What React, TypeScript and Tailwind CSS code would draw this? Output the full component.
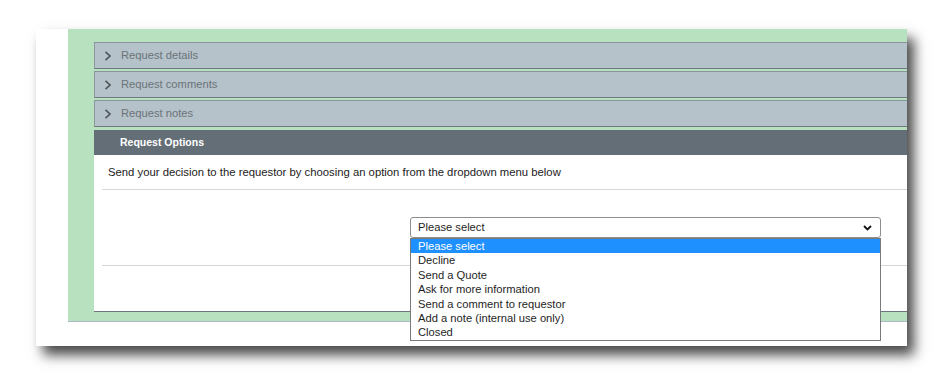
import React from "react";

const options = [
  "Please select",
  "Decline",
  "Send a Quote",
  "Ask for more information",
  "Send a comment to requestor",
  "Add a note (internal use only)",
  "Closed",
];

const Chevron: React.FC = () => (
  <svg width="8" height="12" viewBox="0 0 8 12" className="shrink-0">
    <polyline points="1.5,1.8 6,6 1.5,10.2" fill="none" stroke="#4f575d" strokeWidth="1.7" />
  </svg>
);

const CollapsedRow: React.FC<{ label: string; gap?: string }> = ({ label, gap = "mb-[2px]" }) => (
  <div
    className={`flex h-[27px] items-center border-y border-t-[#88939a] border-b-[#6e787f] border-l border-l-[#8d989e] bg-[#b6c2c9] pl-[9px] ${gap}`}
  >
    <Chevron />
    <span className="ml-[9px] text-[11.2px] text-[#6a7379]">{label}</span>
  </div>
);

export default function App() {
  return (
    <div className="h-[383px] w-[951px] overflow-hidden bg-white pl-[36px] pt-[29px] font-['Liberation_Sans',Arial,sans-serif]">
      <div className="relative h-[317px] w-[871px] bg-white pl-[32px] shadow-[7px_9px_12px_rgba(0,0,0,0.72)]">
        <div className="overflow-hidden border-b border-b-[#abbac6] bg-[#b8e1bf] pb-[9px] pl-[26px] pt-[13px]">
          <CollapsedRow label="Request details" />
          <CollapsedRow label="Request comments" />
          <CollapsedRow label="Request notes" gap="mb-[3px]" />

          <div className="flex h-[25px] items-center bg-[#646e76] pl-[26px]">
            <span className="text-[10.5px] font-bold text-white">Request Options</span>
          </div>

          <div className="h-[157px] border-b border-b-[#6b757c] bg-white">
            <div className="flex h-[34px] items-center pl-[14px] text-[11.3px] text-[#222]">
              Send your decision to the requestor by choosing an option from the dropdown menu below
            </div>
            <div className="ml-[8px] border-t border-t-[#d2d7db]" />
            <div className="relative h-[75px] pl-[316px] pt-[27px]">
              <div className="flex h-[21px] w-[471px] items-center justify-between rounded-[3px] border border-[#8e8e8e] bg-white pl-[7px] pr-[8px] text-[11.2px] text-[#1e1e1e]">
                <span>Please select</span>
                <svg width="9" height="6" viewBox="0 0 9 6">
                  <polyline points="1,1 4.5,4.5 8,1" fill="none" stroke="#111" strokeWidth="1.8" />
                </svg>
              </div>
            </div>
            <div className="ml-[8px] border-t border-t-[#d2d7db]" />
          </div>
        </div>

        <div className="absolute left-[374px] top-[209px] z-10 w-[471px] border border-[#7a7a7a] bg-white text-[11.2px] text-[#1e1e1e]">
          {options.map((o, i) => (
            <div
              key={o}
              className={`h-[14.4px] pl-[7px] leading-[14.4px] ${i === 0 ? "bg-[#1e90ff] text-white" : ""}`}
            >
              {o}
            </div>
          ))}
        </div>
      </div>
    </div>
  );
}
